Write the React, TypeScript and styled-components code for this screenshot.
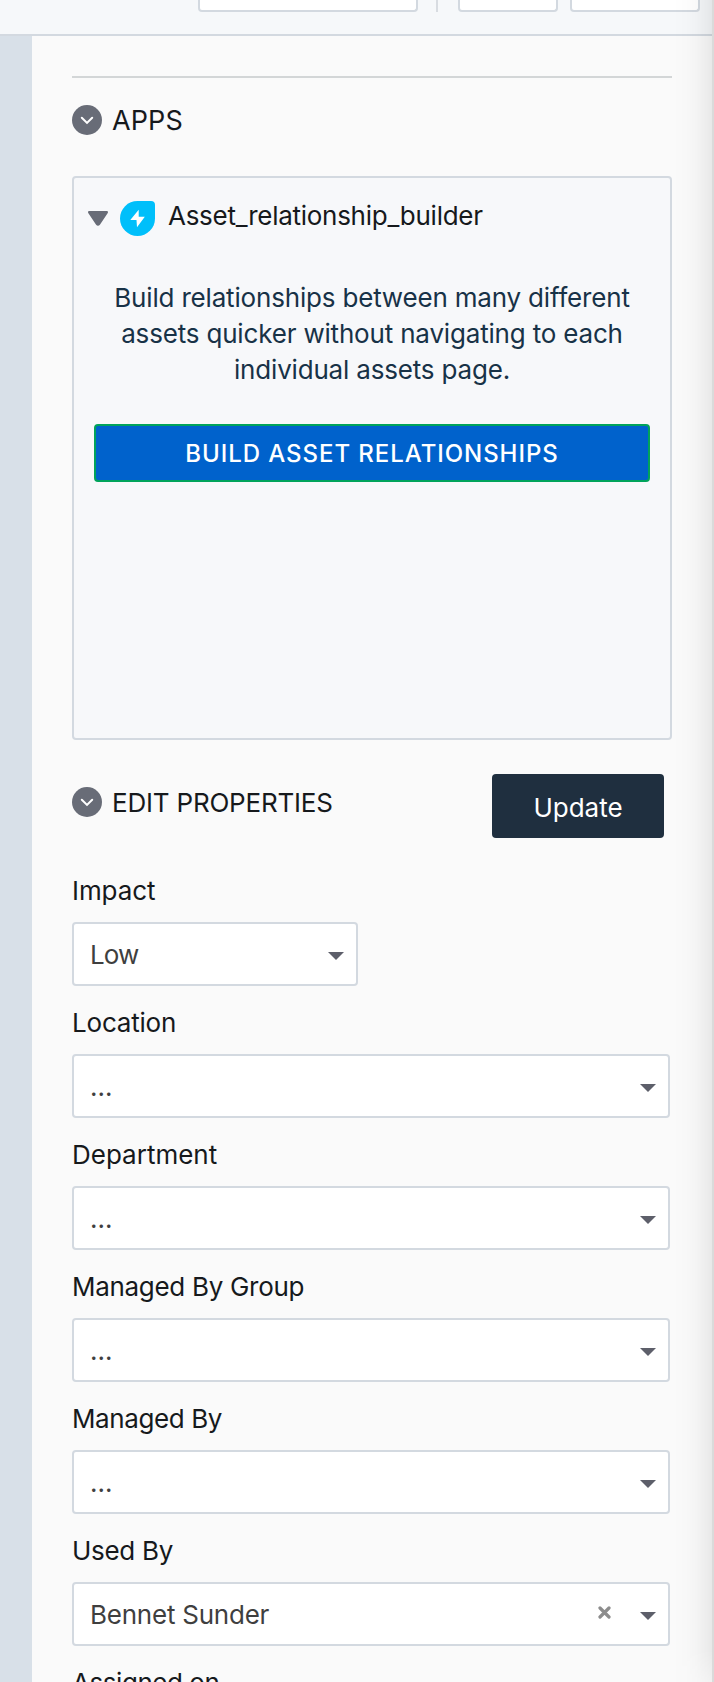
import React from 'react';
import styled, { createGlobalStyle } from 'styled-components';

const GlobalStyle = createGlobalStyle`
  * { box-sizing: border-box; }
  body {
    margin: 0;
    background: #fafafa;
    font-family: Inter, "Liberation Sans", sans-serif;
    font-size: 26px;
    line-height: 36px;
    color: #16191c;
  }
  button { font-family: inherit; cursor: pointer; }
`;

const Page = styled.div`
  position: relative;
  display: flex;
  flex-direction: column;
  height: 1682px;
  overflow: hidden;
`;

const Toolbar = styled.header`
  display: flex;
  flex: none;
  height: 36px;
  padding-left: 198px;
  background: #f6f8fa;
  border-bottom: 2px solid #d3d9e0;
`;

const ToolbarButton = styled.div<{ $width: number; $gap?: number }>`
  flex: none;
  width: ${(p) => p.$width}px;
  height: 12px;
  margin-right: ${(p) => p.$gap ?? 0}px;
  background: #fff;
  border: 2px solid #d3d9e0;
  border-top: 0;
  border-radius: 0 0 4px 4px;
`;

const Divider = styled.div`
  flex: none;
  width: 2px;
  height: 12px;
  margin-right: 20px;
  background: #d8dce1;
`;

const Body = styled.div`
  display: flex;
  flex: 1;
  min-height: 0;
`;

const Gutter = styled.div`
  flex: none;
  width: 32px;
  background: #d8e0e8;
`;

const Sidebar = styled.main`
  flex: 1;
  min-width: 0;
  padding: 40px 42px 0 40px;
  background: #fafafa;
`;

const Rule = styled.hr`
  height: 2px;
  margin: 0 0 27px;
  border: 0;
  background: #d3d6d7;
`;

const SectionTitle = styled.h2<{ $size: number; $tracking: number }>`
  display: flex;
  align-items: center;
  gap: 10px;
  height: 30px;
  margin: 0;
  font-size: ${(p) => p.$size}px;
  font-weight: 400;
  line-height: 30px;
  letter-spacing: ${(p) => p.$tracking}px;
  white-space: nowrap;
`;

const TitleText = styled.span`
  padding-top: 2px;
`;

const AppPanel = styled.section`
  height: 564px;
  margin-top: 41px;
  padding: 23px 20px 0 14px;
  background: #f7f8fa;
  border: 2px solid #d3d9e0;
  border-radius: 4px;
`;

const AppHeader = styled.div`
  display: flex;
  align-items: center;
  height: 35px;
`;

const AppName = styled.h3`
  margin: -6px 0 0 13px;
  font-size: 26px;
  font-weight: 400;
  letter-spacing: -0.27px;
`;

const Description = styled.p`
  margin: 44px 0 0 6px;
  color: #183247;
  text-align: center;
  letter-spacing: -0.18px;
`;

const BuildButton = styled.button`
  display: block;
  width: 556px;
  height: 58px;
  margin: 36px 0 0 6px;
  padding: 0;
  background: #0062cc;
  border: 2px solid #00a35b;
  border-radius: 4px;
  color: #fff;
  font-size: 24px;
  font-weight: 500;
  letter-spacing: 0.94px;
`;

const EditHeader = styled.div`
  display: flex;
  justify-content: space-between;
  align-items: flex-start;
  margin: 34px 8px 35px 0;

  ${SectionTitle} { margin-top: 13px; }
`;

const UpdateButton = styled.button`
  width: 172px;
  height: 64px;
  padding: 2px 0 0;
  background: #1f2f3f;
  border: 0;
  border-radius: 4px;
  color: #fff;
  font-size: 26px;
`;

const Field = styled.div`
  margin-bottom: 19px;
`;

const Label = styled.label<{ $tracking: number }>`
  display: block;
  height: 36px;
  margin-bottom: 13px;
  letter-spacing: ${(p) => p.$tracking}px;
`;

const Select = styled.div<{ $narrow?: boolean }>`
  display: flex;
  align-items: center;
  width: ${(p) => (p.$narrow ? 286 : 598)}px;
  height: 64px;
  padding: 0 12px 0 16px;
  background: #fff;
  border: 2px solid #d3d9e0;
  border-radius: 4px;
  color: #3f3f3f;
`;

const Value = styled.span<{ $tracking: number }>`
  flex: 1;
  padding-top: 2px;
  letter-spacing: ${(p) => p.$tracking}px;
`;

const ClearIcon = styled.svg`
  margin: 0 29px 4px 0;
`;

const EdgeShade = styled.div`
  position: absolute;
  top: 0;
  right: 2px;
  bottom: 0;
  width: 40px;
  background: linear-gradient(
    to right,
    rgba(0, 0, 0, 0),
    rgba(0, 0, 0, 0.008) 35%,
    rgba(0, 0, 0, 0.024) 60%,
    rgba(0, 0, 0, 0.05) 85%,
    rgba(0, 0, 0, 0.075)
  );
  mask-image: linear-gradient(to top, rgba(0, 0, 0, 0.5), #000 32px);
  pointer-events: none;
`;

const EdgeLine = styled.div`
  position: absolute;
  top: 0;
  right: 0;
  bottom: 0;
  width: 2px;
  background: #dadada;
`;

const CollapseIcon = () => (
  <svg width="30" height="30" viewBox="0 0 30 30" fill="none">
    <circle cx="15" cy="15" r="15" fill="#686c77" />
    <path d="M9.8 12.7 15 17.9l5.2-5.2" stroke="#fff" strokeWidth="2" strokeLinecap="round" />
  </svg>
);

const TreeCaret = () => (
  <svg width="20" height="15" viewBox="0 0 20 15">
    <path d="M1.4 0h17.2c1.3 0 1.8 1.2 1 2.2l-7.7 11.5c-1 1.5-2.8 1.5-3.8 0L.4 2.2C-.4 1.2.1 0 1.4 0Z" fill="#686c77" />
  </svg>
);

const Logo = styled.svg`
  margin-left: 12px;
`;

const AppLogo = () => (
  <Logo width="35" height="35" viewBox="0 0 35 35">
    <path d="M17.5 0H31a4 4 0 0 1 4 4v13.5A17.5 17.5 0 1 1 17.5 0Z" fill="#00bffa" />
    <path d="M18.7 8.7 10.3 19h6.2l.5 7.3 7.8-10.5h-6.1Z" fill="#fff" />
  </Logo>
);

const Caret = styled.svg`
  margin-top: 4px;
`;

const DropCaret = () => (
  <Caret width="16" height="8" viewBox="0 0 16 8">
    <path d="M0 0h16L8 8Z" fill="#5d5f6a" />
  </Caret>
);

type FieldData = {
  label: string;
  tracking: number;
  value?: string;
  valueTracking?: number;
  narrow?: boolean;
  clearable?: boolean;
};

const fields: FieldData[] = [
  { label: 'Impact', tracking: -0.1, value: 'Low', valueTracking: -0.9, narrow: true },
  { label: 'Location', tracking: -0.2 },
  { label: 'Department', tracking: 0 },
  { label: 'Managed By Group', tracking: -0.3 },
  { label: 'Managed By', tracking: -0.4 },
  { label: 'Used By', tracking: -0.3, value: 'Bennet Sunder', valueTracking: -0.23, clearable: true },
];

export default function App() {
  return (
    <Page>
      <GlobalStyle />
      <Toolbar>
        <ToolbarButton $width={220} $gap={18} />
        <Divider />
        <ToolbarButton $width={100} $gap={12} />
        <ToolbarButton $width={130} />
      </Toolbar>
      <Body>
        <Gutter />
        <Sidebar>
          <Rule />
          <SectionTitle $size={27} $tracking={0.1}>
            <CollapseIcon />
            <TitleText>APPS</TitleText>
          </SectionTitle>
          <AppPanel>
            <AppHeader>
              <TreeCaret />
              <AppLogo />
              <AppName>Asset_relationship_builder</AppName>
            </AppHeader>
            <Description>
              Build relationships between many different
              <br />
              assets quicker without navigating to each
              <br />
              individual assets page.
            </Description>
            <BuildButton>BUILD ASSET RELATIONSHIPS</BuildButton>
          </AppPanel>
          <EditHeader>
            <SectionTitle $size={26} $tracking={-0.2}>
              <CollapseIcon />
              <TitleText>EDIT PROPERTIES</TitleText>
            </SectionTitle>
            <UpdateButton>Update</UpdateButton>
          </EditHeader>
          {fields.map((field) => (
            <Field key={field.label}>
              <Label $tracking={field.tracking}>{field.label}</Label>
              <Select $narrow={field.narrow}>
                <Value $tracking={field.valueTracking ?? 0}>{field.value ?? '...'}</Value>
                {field.clearable && (
                  <ClearIcon width="13" height="13" viewBox="0 0 13 13">
                    <path d="M2 2l9 9M11 2l-9 9" stroke="#8c8c8c" strokeWidth="3.2" strokeLinecap="round" />
                  </ClearIcon>
                )}
                <DropCaret />
              </Select>
            </Field>
          ))}
          <Label $tracking={-0.45}>Assigned on</Label>
        </Sidebar>
      </Body>
      <EdgeShade />
      <EdgeLine />
    </Page>
  );
}
